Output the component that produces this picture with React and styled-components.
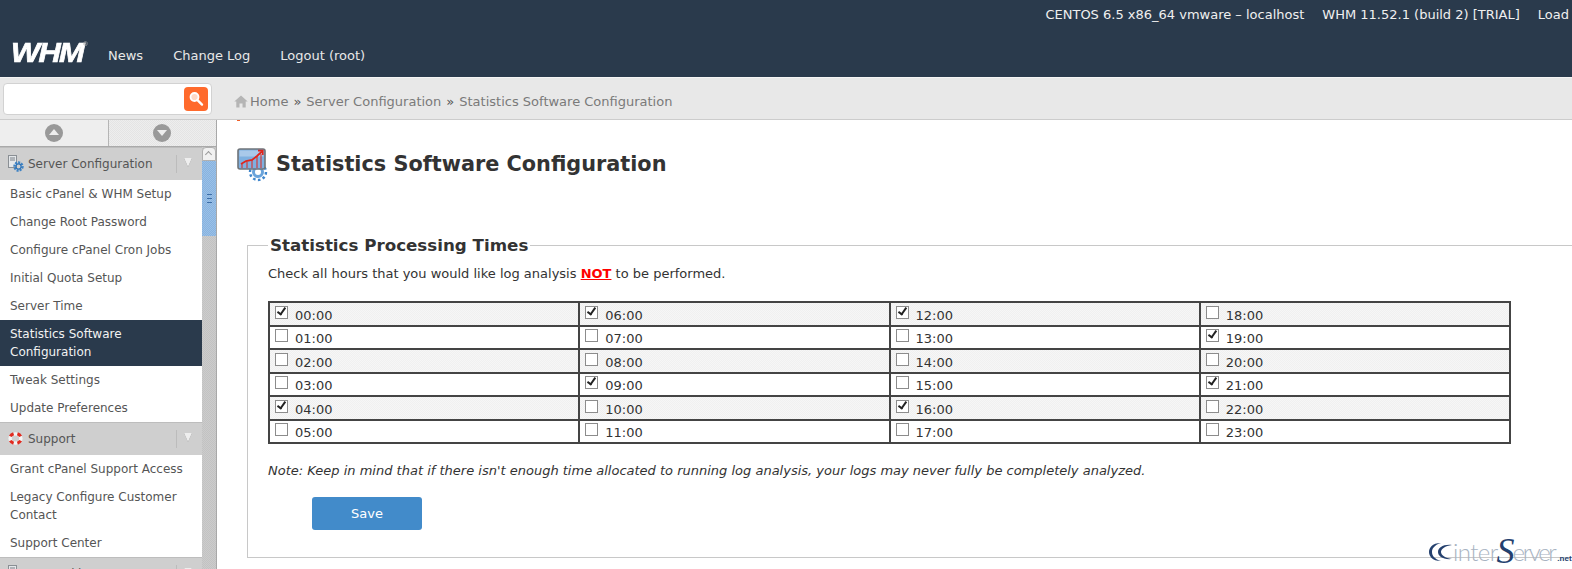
import React from "react";
import styled, { createGlobalStyle } from "styled-components";

const HOURS = Array.from({ length: 24 }, (_, i) => `${String(i).padStart(2, "0")}:00`);
const CHECKED = ["00:00", "06:00", "12:00", "19:00", "09:00", "21:00", "04:00", "16:00"];

const SERVER_LINKS = [
  { label: "Basic cPanel & WHM Setup" },
  { label: "Change Root Password" },
  { label: "Configure cPanel Cron Jobs" },
  { label: "Initial Quota Setup" },
  { label: "Server Time" },
  { label: "Statistics Software Configuration", active: true },
  { label: "Tweak Settings" },
  { label: "Update Preferences" },
];

const SUPPORT_LINKS = [
  { label: "Grant cPanel Support Access" },
  { label: "Legacy Configure Customer Contact" },
  { label: "Support Center" },
];

function SearchIcon() {
  return (
    <svg width="16" height="16" viewBox="0 0 16 16">
      <circle cx="6.5" cy="6" r="4" fill="#ffd9c6" stroke="#fff" strokeWidth="1.8" />
      <path d="M9.5 9.2 14 13.6" stroke="#fff" strokeWidth="2.4" strokeLinecap="round" />
    </svg>
  );
}

function HomeIcon() {
  return (
    <svg width="14" height="13" viewBox="0 0 14 13">
      <path d="M7 0.5 0.3 6.6h2v6h3.2V8.4h3v4.2h3.2v-6h2z" fill="#b5b5b5" />
    </svg>
  );
}

function ServerIcon() {
  return (
    <svg width="17" height="17" viewBox="0 0 17 17">
      <rect x="1.5" y="0.5" width="8" height="12" fill="#e4e7ea" stroke="#8a8f94" />
      <path d="M3 3h5M3 5h5" stroke="#7a8087" />
      <circle cx="11.5" cy="11.5" r="4" fill="none" stroke="#3d82c4" strokeWidth="2.4" strokeDasharray="2 1" />
      <circle cx="11.5" cy="11.5" r="2.6" fill="none" stroke="#2f74b8" strokeWidth="1.2" />
    </svg>
  );
}

function LifebuoyIcon() {
  return (
    <svg width="15" height="13" viewBox="0 0 15 13">
      <ellipse cx="7.5" cy="6.5" rx="5.4" ry="4.6" fill="none" stroke="#f4f4f4" strokeWidth="3.4" />
      <path d="M2.4 4.4A5.6 4.8 0 0 1 5.6 1.8M9.4 1.8A5.6 4.8 0 0 1 12.6 4.4M12.6 8.6A5.6 4.8 0 0 1 9.4 11.2M5.6 11.2A5.6 4.8 0 0 1 2.4 8.6" fill="none" stroke="#e02b20" strokeWidth="3.2" />
    </svg>
  );
}

function ChartIcon() {
  return (
    <svg width="34" height="34" viewBox="0 0 34 34">
      <circle cx="21" cy="24" r="8" fill="none" stroke="#3f86cc" strokeWidth="2.4" strokeDasharray="2.6 2.4" />
      <circle cx="21" cy="24" r="6" fill="#6aa3da" />
      <circle cx="21" cy="24" r="3" fill="#fff" />
      <rect x="1" y="1" width="27" height="20" rx="2" fill="#7fb0e0" stroke="#6f7479" strokeWidth="1.6" />
      <rect x="2.5" y="2.5" width="24" height="6" fill="#a9c9ea" />
      <path d="M5 20v-4M10 20v-6M15 20v-8M20 20V8M24 20V6" stroke="#e0261c" strokeWidth="1" />
      <path d="M4 16 9 13 15 12 20 8 25 3.5" fill="none" stroke="#e0261c" strokeWidth="1.8" />
      <path d="M21 2.6h4.8v4.4" fill="none" stroke="#e0261c" strokeWidth="1.6" />
    </svg>
  );
}

function SwooshIcon() {
  return (
    <svg width="25" height="20" viewBox="0 0 25 20">
      <path d="M13 1C4 1 1 6 1 10s3 9 12 9C6 17 4 13 4 10s2-7 9-9z" fill="#24406e" />
      <path d="M24 3C15 2 10 6 10 10s5 8 14 7C17 16 13 13 13 10s4-6 11-7z" fill="#24406e" />
    </svg>
  );
}

function Section({ icon, title, links }) {
  return (
    <>
      <SectionHead>
        <SectionIcon>{icon}</SectionIcon>
        <SectionTitle>{title}</SectionTitle>
        <Collapse />
      </SectionHead>
      {links &&
        links.map((l) => (
          <NavLink key={l.label} $active={l.active}>
            {l.label}
          </NavLink>
        ))}
    </>
  );
}

export default function App() {
  const rows = [0, 1, 2, 3, 4, 5];
  const cols = [0, 1, 2, 3];
  return (
    <Page>
      <GlobalStyle />
      <Header>
        <InfoBar>
          <span>CENTOS 6.5 x86_64 vmware – localhost</span>
          <span>WHM 11.52.1 (build 2) [TRIAL]</span>
          <span>Load</span>
        </InfoBar>
        <MainNav>
          <Logo>
            WHM<sup>®</sup>
          </Logo>
          <NavItems>
            <a>News</a>
            <a>Change Log</a>
            <a>Logout (root)</a>
          </NavItems>
        </MainNav>
      </Header>
      <Toolbar>
        <SearchSlot>
          <SearchBox>
            <SearchButton>
              <SearchIcon />
            </SearchButton>
          </SearchBox>
        </SearchSlot>
        <Breadcrumb>
          <HomeIcon />
          <span>Home</span>
          <Sep>»</Sep>
          <span>Server Configuration</span>
          <Sep>»</Sep>
          <span>Statistics Software Configuration</span>
        </Breadcrumb>
      </Toolbar>
      <Body>
        <Sidebar>
          <ArrowRow>
            <ArrowCell>
              <ArrowDisc />
            </ArrowCell>
            <ArrowCell $dotted $down>
              <ArrowDisc $down />
            </ArrowCell>
          </ArrowRow>
          <SideScroll>
            <NavList>
              <Section icon={<ServerIcon />} title="Server Configuration" links={SERVER_LINKS} />
              <Section icon={<LifebuoyIcon />} title="Support" links={SUPPORT_LINKS} />
              <Section icon={<ServerIcon />} title="Networking Setup" />
            </NavList>
            <Scrollbar>
              <ScrollUp />
              <ScrollThumb>
                <Grip />
              </ScrollThumb>
            </Scrollbar>
          </SideScroll>
        </Sidebar>
        <Main>
          <RedTick />
          <TitleRow>
            <ChartIcon />
            <Title>Statistics Software Configuration</Title>
          </TitleRow>
          <Group>
            <Legend>Statistics Processing Times</Legend>
            <Intro>
              Check all hours that you would like log analysis <Not>NOT</Not> to be performed.
            </Intro>
            <HoursTable>
              <tbody>
                {rows.map((r) => (
                  <tr key={r}>
                    {cols.map((c) => {
                      const hour = HOURS[c * 6 + r];
                      return (
                        <HourCell key={hour} $shaded={r % 2 === 0}>
                          <HourBox type="checkbox" defaultChecked={CHECKED.includes(hour)} />
                          {hour}
                        </HourCell>
                      );
                    })}
                  </tr>
                ))}
              </tbody>
            </HoursTable>
            <Note>
              Note: Keep in mind that if there isn't enough time allocated to running log analysis, your logs may never
              fully be completely analyzed.
            </Note>
            <SaveButton>Save</SaveButton>
          </Group>
        </Main>
      </Body>
      <Watermark>
        <SwooshIcon />
        <WatermarkWord $spacing="-0.6px">inter</WatermarkWord>
        <BigS>S</BigS>
        <WatermarkWord $spacing="-2.4px">erver</WatermarkWord>
        <small>.net</small>
      </Watermark>
    </Page>
  );
}

const GlobalStyle = createGlobalStyle`
  html, body {
    margin: 0;
    padding: 0;
    height: 100%;
    overflow: hidden;
    background: #fff;
  }
  body {
    font-family: "DejaVu Sans", sans-serif;
    font-size: 13px;
    color: #333;
  }
`;

const dots = (a, b) => `
  background-color: ${a};
  background-image: linear-gradient(45deg, ${b} 25%, transparent 25%, transparent 75%, ${b} 75%),
    linear-gradient(45deg, ${b} 25%, transparent 25%, transparent 75%, ${b} 75%);
  background-size: 2px 2px;
  background-position: 0 0, 1px 1px;
`;

const Page = styled.div`
  position: relative;
  height: 569px;
  display: flex;
  flex-direction: column;
  overflow: hidden;
`;

const Header = styled.header`
  height: 78px;
  flex: none;
  background: #2a3a4c;
  color: #f0f0f0;
  box-sizing: border-box;
  border-bottom: 1px solid #f4f4f4;
`;

const InfoBar = styled.div`
  height: 29px;
  display: flex;
  justify-content: flex-end;
  align-items: center;
  gap: 18px;
  padding-right: 3px;
  font-size: 13px;
  white-space: nowrap;
`;

const MainNav = styled.nav`
  display: flex;
  align-items: center;
  height: 48px;
  padding: 4px 0 0 11px;
  box-sizing: border-box;
`;

const Logo = styled.div`
  width: 97px;
  font-family: "Liberation Sans", sans-serif;
  font-size: 28px;
  line-height: 28px;
  font-weight: 700;
  font-style: italic;
  letter-spacing: -1.5px;
  color: #fff;
  -webkit-text-stroke: 0.7px #fff;
  transform: scaleX(1.1);
  transform-origin: left center;
  margin-top: -4px;
  sup {
    font-size: 6px;
    line-height: 0;
    font-style: normal;
    vertical-align: 16px;
    color: #aaa;
    -webkit-text-stroke: 0;
  }
`;

const NavItems = styled.div`
  display: flex;
  gap: 30px;
  font-size: 13px;
  color: #e8e8e8;
`;

const Toolbar = styled.div`
  height: 42px;
  flex: none;
  display: flex;
  background: #e8e8e8;
  box-sizing: border-box;
  border-bottom: 1px solid #ccc;
`;

const SearchSlot = styled.div`
  width: 217px;
  flex: none;
  box-sizing: border-box;
  padding: 5px 0 0 3px;
`;

const SearchBox = styled.div`
  width: 209px;
  height: 32px;
  box-sizing: border-box;
  background: #fff;
  border: 1px solid #d2d2d2;
  border-radius: 4px;
  display: flex;
  justify-content: flex-end;
  align-items: center;
  padding-right: 3px;
`;

const SearchButton = styled.div`
  width: 24px;
  height: 24px;
  border-radius: 4px;
  background: #ff6a2c;
  display: flex;
  align-items: center;
  justify-content: center;
`;

const Breadcrumb = styled.div`
  display: flex;
  align-items: center;
  padding: 5px 0 0 17px;
  gap: 3px;
  font-size: 13px;
  color: #7a7a7a;
  svg {
    margin-right: -1px;
  }
`;

const Sep = styled.span`
  color: #555;
  margin: 0 2px;
`;

const Body = styled.div`
  flex: 1;
  display: flex;
  min-height: 0;
`;

const Sidebar = styled.aside`
  width: 217px;
  flex: none;
  box-sizing: border-box;
  border-right: 1px solid #a8a8a8;
  display: flex;
  flex-direction: column;
  min-height: 0;
`;

const ArrowRow = styled.div`
  height: 27px;
  flex: none;
  display: flex;
  box-sizing: border-box;
  border-bottom: 1px solid #aaa;
`;

const ArrowCell = styled.div`
  flex: 1;
  display: flex;
  align-items: center;
  justify-content: center;
  ${({ $dotted }) => ($dotted ? dots("#eeeeee", "#e4e4e4") : "background: #eeeeee;")}
  border-left: ${({ $down }) => ($down ? "1px solid #b5b5b5" : "none")};
`;

const ArrowDisc = styled.div`
  position: relative;
  width: 18px;
  height: 18px;
  border-radius: 50%;
  background: #999;
  &::after {
    content: "";
    position: absolute;
    left: 4px;
    ${({ $down }) =>
      $down
        ? "top: 6px; border-top: 6px solid #eee;"
        : "top: 5px; border-bottom: 6px solid #eee;"}
    border-left: 5px solid transparent;
    border-right: 5px solid transparent;
  }
`;

const SideScroll = styled.div`
  flex: 1;
  display: flex;
  min-height: 0;
  overflow: hidden;
`;

const NavList = styled.div`
  flex: 1;
  min-width: 0;
`;

const SectionHead = styled.div`
  height: 33px;
  box-sizing: border-box;
  display: flex;
  align-items: center;
  background: #cfcfcf;
  border-top: 1px solid #bdbdbd;
  padding-bottom: 1px;
  color: #555;
  font-size: 12px;
`;

const SectionIcon = styled.span`
  width: 28px;
  flex: none;
  display: flex;
  justify-content: center;
  padding-left: 2px;
  box-sizing: border-box;
`;

const SectionTitle = styled.span`
  flex: 1;
  white-space: nowrap;
`;

const Collapse = styled.span`
  position: relative;
  width: 26px;
  height: 18px;
  box-sizing: border-box;
  border-left: 1px solid #bcbcbc;
  flex: none;
  &::after {
    content: "";
    position: absolute;
    left: 7px;
    top: 3px;
    border-top: 9px solid #eeeeee;
    border-left: 4px solid transparent;
    border-right: 4px solid transparent;
    filter: drop-shadow(0 0 0.5px #777);
  }
`;

const NavLink = styled.div`
  padding: 5px 8px 5px 10px;
  line-height: 18px;
  font-size: 12px;
  color: ${({ $active }) => ($active ? "#f2f2f2" : "#555")};
  background: ${({ $active }) => ($active ? "#2a3a4c" : "#fff")};
`;

const Scrollbar = styled.div`
  width: 14px;
  flex: none;
  ${dots("#cccccc", "#c2c2c2")}
`;

const ScrollUp = styled.div`
  position: relative;
  height: 14px;
  box-sizing: border-box;
  background: #f1f1f1;
  border: 1px solid #b0b0b0;
  border-radius: 4px 4px 0 0;
  &::after {
    content: "";
    position: absolute;
    left: 3px;
    top: 4px;
    width: 5px;
    height: 5px;
    box-sizing: border-box;
    border-left: 1px solid #9a9a9a;
    border-top: 1px solid #9a9a9a;
    transform: rotate(45deg);
  }
`;

const ScrollThumb = styled.div`
  height: 75px;
  display: flex;
  align-items: center;
  justify-content: center;
  ${dots("#86b3e0", "#9cc0e6")}
`;

const Grip = styled.div`
  width: 5px;
  height: 7px;
  border-top: 1px solid #3c6ea8;
  border-bottom: 1px solid #3c6ea8;
  position: relative;
  &::after {
    content: "";
    position: absolute;
    left: 0;
    right: 0;
    top: 3px;
    border-top: 1px solid #3c6ea8;
  }
`;

const Main = styled.main`
  position: relative;
  flex: 1;
  min-width: 0;
  padding: 0 0 0 20px;
  overflow: hidden;
`;

const RedTick = styled.div`
  position: absolute;
  left: 20px;
  top: 0;
  width: 3px;
  height: 1px;
  background: #f0602a;
`;

const TitleRow = styled.div`
  display: flex;
  align-items: flex-start;
  gap: 5px;
  padding-top: 28px;
  height: 87px;
`;

const Title = styled.h1`
  margin: 1px 0 0;
  font-size: 20.8px;
  line-height: 30px;
  font-weight: 700;
  color: #333;
`;

const Group = styled.fieldset`
  width: 1340px;
  height: 323px;
  box-sizing: border-box;
  margin: 0 0 0 10px;
  padding: 0 0 0 20px;
  border: 1px solid #c8c8c8;
`;

const Legend = styled.legend`
  padding: 0 2px;
  font-size: 16.7px;
  font-weight: 700;
  color: #333;
`;

const Intro = styled.p`
  margin: 10px 0 0;
  font-size: 13px;
  line-height: 18px;
`;

const Not = styled.span`
  color: #f00;
  font-weight: 700;
  text-decoration: underline;
`;

const HoursTable = styled.table`
  margin-top: 18px;
  width: 1243px;
  table-layout: fixed;
  border-collapse: collapse;
  border: 2px solid #444;
  font-size: 13px;
`;

const HourCell = styled.td`
  height: 23.5px;
  padding: 1px 0 0 5px;
  box-sizing: border-box;
  border: 2px solid #444;
  ${({ $shaded }) => ($shaded ? dots("#f6f6f6", "#f0f0f0") : "background: #fff;")}
`;

const HourBox = styled.input`
  appearance: none;
  position: relative;
  width: 13px;
  height: 13px;
  margin: 0 7px 0 0;
  box-sizing: border-box;
  background: #fff;
  border: 1px solid #8c8c8c;
  vertical-align: 1px;
  &:checked::after {
    content: "";
    position: absolute;
    left: 3px;
    top: -1px;
    width: 5px;
    height: 9px;
    box-sizing: border-box;
    border-right: 2px solid #222;
    border-bottom: 2px solid #222;
    transform: rotate(35deg);
  }
`;

const Note = styled.p`
  margin: 18px 0 0;
  font-size: 13px;
  font-style: italic;
  line-height: 18px;
`;

const SaveButton = styled.button`
  display: block;
  margin: 17px 0 0 44px;
  width: 110px;
  height: 33px;
  border: none;
  border-radius: 3px;
  background: #428bca;
  color: #fff;
  font-family: inherit;
  font-size: 13px;
`;

const Watermark = styled.div`
  position: absolute;
  left: 1428px;
  top: 538px;
  display: flex;
  align-items: flex-end;
  height: 28px;
  font-family: "Lato", sans-serif;
  font-size: 24px;
  line-height: 28px;
  color: #a8b3c2;
  font-weight: 300;
  small {
    font-family: "Liberation Sans", sans-serif;
    font-size: 8px;
    line-height: 14px;
    color: #24406e;
    font-weight: 700;
    margin-left: 3px;
  }
  svg {
    margin-bottom: 4px;
  }
`;

const WatermarkWord = styled.span`
  letter-spacing: ${({ $spacing }) => $spacing};
`;

const BigS = styled.span`
  color: #24406e;
  font-family: "Liberation Serif", serif;
  font-style: italic;
  font-size: 36px;
  line-height: 30px;
  margin: 0 -2px 0 -1px;
`;
